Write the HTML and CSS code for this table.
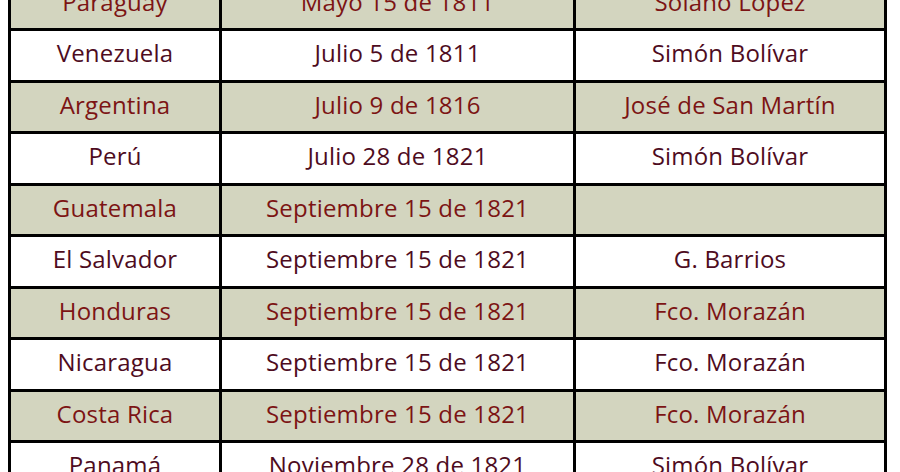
FILE: index.html
```html
<!DOCTYPE html>
<html lang="es">
<head>
<meta charset="utf-8">
<title>Independencias</title>
<link rel="stylesheet" href="styles.css">
</head>
<body>
<div class="table">
  <div class="cell shade">Paraguay</div><div class="cell shade">Mayo 15 de 1811</div><div class="cell shade">Solano López</div>
  <div class="cell">Venezuela</div><div class="cell">Julio 5 de 1811</div><div class="cell">Simón Bolívar</div>
  <div class="cell shade">Argentina</div><div class="cell shade">Julio 9 de 1816</div><div class="cell shade">José de San Martín</div>
  <div class="cell">Perú</div><div class="cell">Julio 28 de 1821</div><div class="cell">Simón Bolívar</div>
  <div class="cell shade">Guatemala</div><div class="cell shade">Septiembre 15 de 1821</div><div class="cell shade"></div>
  <div class="cell">El Salvador</div><div class="cell">Septiembre 15 de 1821</div><div class="cell">G. Barrios</div>
  <div class="cell shade">Honduras</div><div class="cell shade">Septiembre 15 de 1821</div><div class="cell shade">Fco. Morazán</div>
  <div class="cell">Nicaragua</div><div class="cell">Septiembre 15 de 1821</div><div class="cell">Fco. Morazán</div>
  <div class="cell shade">Costa Rica</div><div class="cell shade">Septiembre 15 de 1821</div><div class="cell shade">Fco. Morazán</div>
  <div class="cell">Panamá</div><div class="cell">Noviembre 28 de 1821</div><div class="cell">Simón Bolívar</div>
</div>
</body>
</html>
```
FILE: styles.css
```css
html, body {
  margin: 0;
  padding: 0;
  background: #ffffff;
  overflow: hidden;
}
.table {
  display: grid;
  grid-template-columns: 208px 351px 308px;
  grid-auto-rows: 48.5px;
  gap: 3px;
  padding: 3px;
  background: #000000;
  width: max-content;
  margin: -23.5px 0 0 8px;
}
.cell {
  background: #ffffff;
  display: flex;
  align-items: center;
  justify-content: center;
  font-family: "Comic Sans MS", "Open Sans", sans-serif;
  font-size: 24px;
  letter-spacing: 0.2px;
  color: #4e0c1e;
  padding-bottom: 5px;
  box-sizing: border-box;
}
.shade {
  background: #d3d5bf;
  color: #7c1414;
}
```
